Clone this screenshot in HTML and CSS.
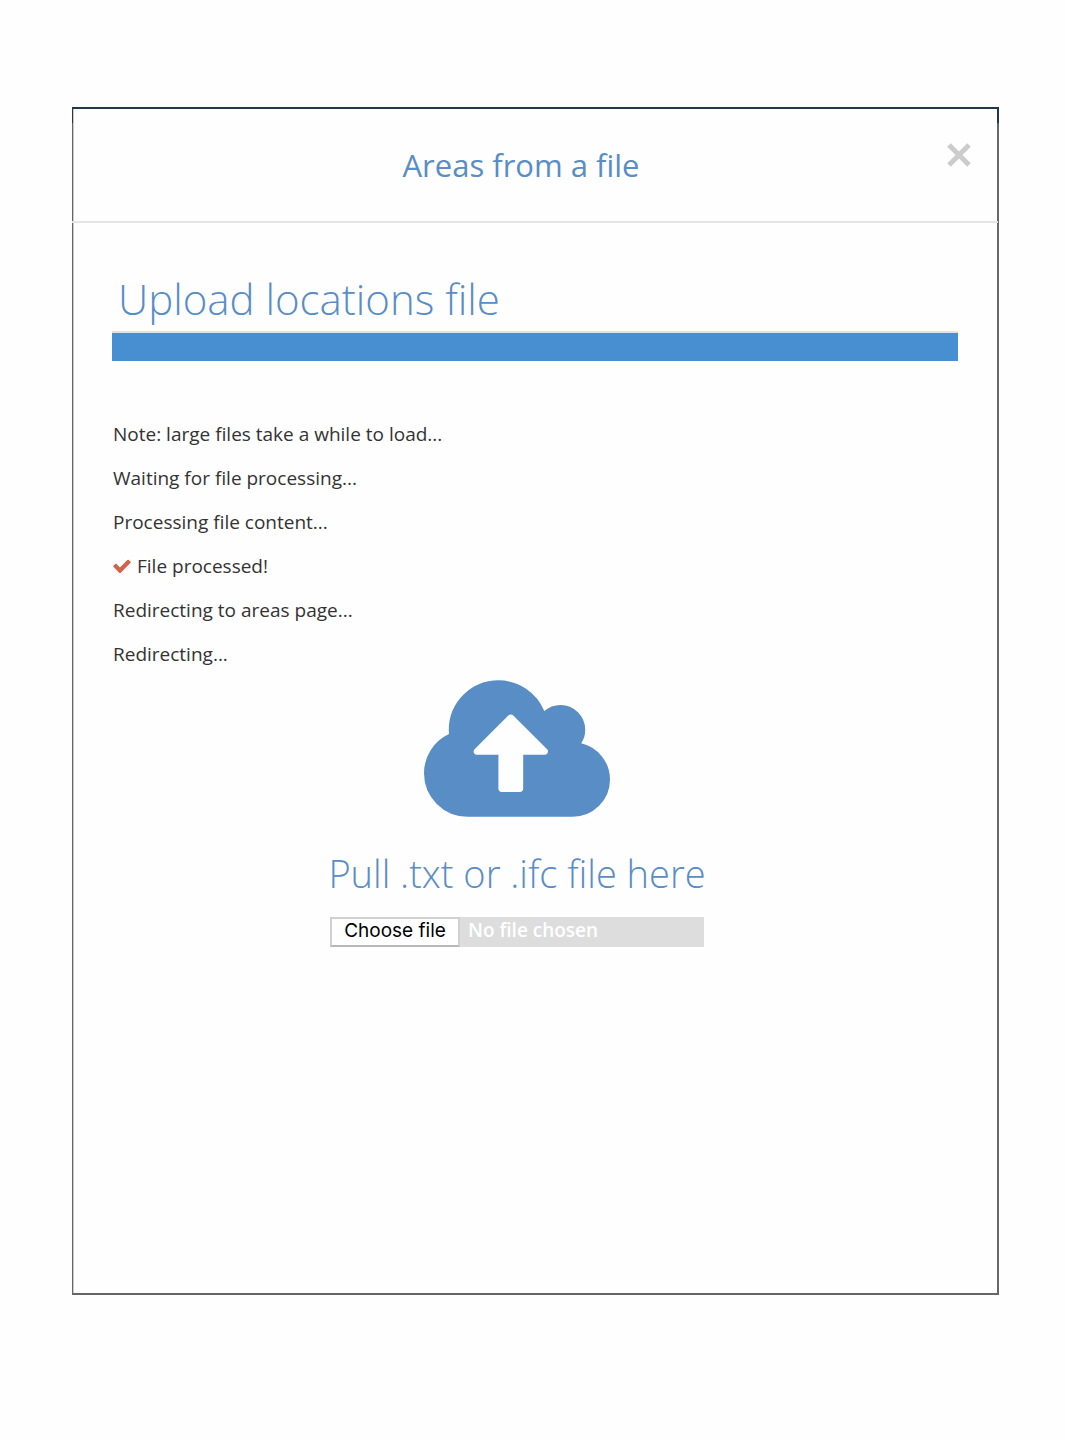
FILE: index.html
```html
<!DOCTYPE html>
<html lang="en-GB">
<head>
<meta charset="utf-8">
<meta name="viewport" content="width=device-width, initial-scale=1">
<title>Areas from a file</title>
<link rel="stylesheet" href="styles.css">
</head>
<body>
<main class="dialog">
  <header class="dialog-header">
    <h1 class="dialog-title">Areas from a file</h1>
    <button class="close" type="button" aria-label="Close">
      <svg viewBox="0 0 26 26" width="26" height="26" aria-hidden="true"><path d="M3 3 23 23M23 3 3 23"/></svg>
    </button>
  </header>
  <div class="dialog-body">
    <h2 class="section-title">Upload locations file</h2>
    <div class="progress" role="progressbar" aria-label="Upload progress" aria-valuenow="100" aria-valuemin="0" aria-valuemax="100"></div>
    <div class="log">
      <p>Note: large files take a while to load...</p>
      <p>Waiting for file processing...</p>
      <p>Processing file content...</p>
      <p class="done"><svg class="check" viewBox="121 270 1550 1252" width="18" height="14" aria-hidden="true"><path d="M1671 566q0 40-28 68l-724 724-136 136q-28 28-68 28t-68-28l-136-136-362-362q-28-28-28-68t28-68l136-136q28-28 68-28t68 28l294 295 656-657q28-28 68-28t68 28l136 136q28 28 28 68z"/></svg>File processed!</p>
      <p>Redirecting to areas page...</p>
      <p>Redirecting...</p>
    </div>
    <section class="drop">
      <svg class="cloud" viewBox="0 128 1920 1408" width="186" height="137" aria-hidden="true"><path d="M1280 864q0-14-9-23l-352-352q-9-9-23-9t-23 9l-351 351q-10 12-10 24 0 14 9 23t23 9h224v352q0 13 9.5 22.5t22.5 9.5h192q13 0 22.5-9.5t9.5-22.5v-352h224q13 0 22.5-9.5t9.5-22.5zm640 288q0 159-112.5 271.5t-271.5 112.5h-1088q-185 0-316.5-131.5t-131.5-316.5q0-130 70-240t188-165q-2-30-2-43 0-212 150-362t362-150q156 0 285.5 87t188.5 231q71-62 166-62 106 0 181 75t75 181q0 76-41 138 130 31 213.5 135.5t83.5 238.5z"/></svg>
      <p class="drop-title">Pull .txt or .ifc file here</p>
      <label class="picker">
        <input class="picker-input" type="file" accept=".txt,.ifc">
        <span class="picker-button">Choose file</span>
        <span class="picker-status">No file chosen</span>
      </label>
    </section>
  </div>
</main>
</body>
</html>
```
FILE: styles.css
```css
* { box-sizing: border-box; }

body {
  margin: 0;
  padding: 107px 66px 145px 72px;
  background: #fefefe;
  color: #333;
  font: 19px/24px "Open Sans", sans-serif;
}

h1, h2, p { margin: 0; }

.dialog {
  min-height: calc(100vh - 252px);
  border: solid #666;
  border-width: 2px 2px 2px 1px;
  border-image: linear-gradient(#20384d 16px, #666 16px) 2 2 2 1;
  box-shadow: inset 1px 0 #ccc;
}

.dialog-header {
  display: flex;
  align-items: flex-start;
  height: 114px;
  margin: 0 -1px;
  padding: 33px 26px 0 24px;
  border-bottom: 2px solid #e4e4e4;
}

.dialog-title {
  flex: 1;
  color: #588dc6;
  font-size: 31px;
  font-weight: 400;
  line-height: 46px;
  text-align: center;
}

.close {
  display: flex;
  padding: 0;
  border: 0;
  background: none;
  cursor: pointer;
}

.close path {
  fill: none;
  stroke: #ccc;
  stroke-width: 5;
}

.dialog-body { padding: 48px 39px 40px; }

.section-title {
  padding: 0 6px 4px;
  border-bottom: 2px solid #d9e3ea;
  color: #588dc6;
  font-size: 42px;
  font-weight: 300;
  line-height: 56px;
}

.progress {
  height: 28px;
  background: #488fd2;
}

.log {
  display: grid;
  gap: 20px;
  margin-top: 61px;
  padding-left: 1px;
}

.done {
  display: flex;
  align-items: center;
  gap: 6px;
}

.check { fill: #d1634a; }

.drop {
  display: flex;
  flex-direction: column;
  align-items: center;
  margin-top: 14px;
  padding-right: 36px;
}

.cloud { fill: #588dc6; }

.drop-title {
  margin-top: 26px;
  color: #588dc6;
  font-size: 38px;
  font-weight: 300;
  line-height: 60px;
}

.picker {
  position: relative;
  display: flex;
  width: 374px;
  height: 30px;
  margin-top: 14px;
  background: #ddd;
  cursor: pointer;
}

.picker-input {
  position: absolute;
  inset: 0;
  width: 100%;
  opacity: 0;
  cursor: pointer;
}

.picker-button {
  width: 130px;
  border: 2px solid #d0d0d0;
  border-bottom-color: #b8b8b8;
  background: #fff;
  color: #000;
  font-family: Inter, sans-serif;
  text-align: center;
}

.picker-status {
  padding: 1px 8px;
  color: #fff;
  font-weight: 600;
}
```
